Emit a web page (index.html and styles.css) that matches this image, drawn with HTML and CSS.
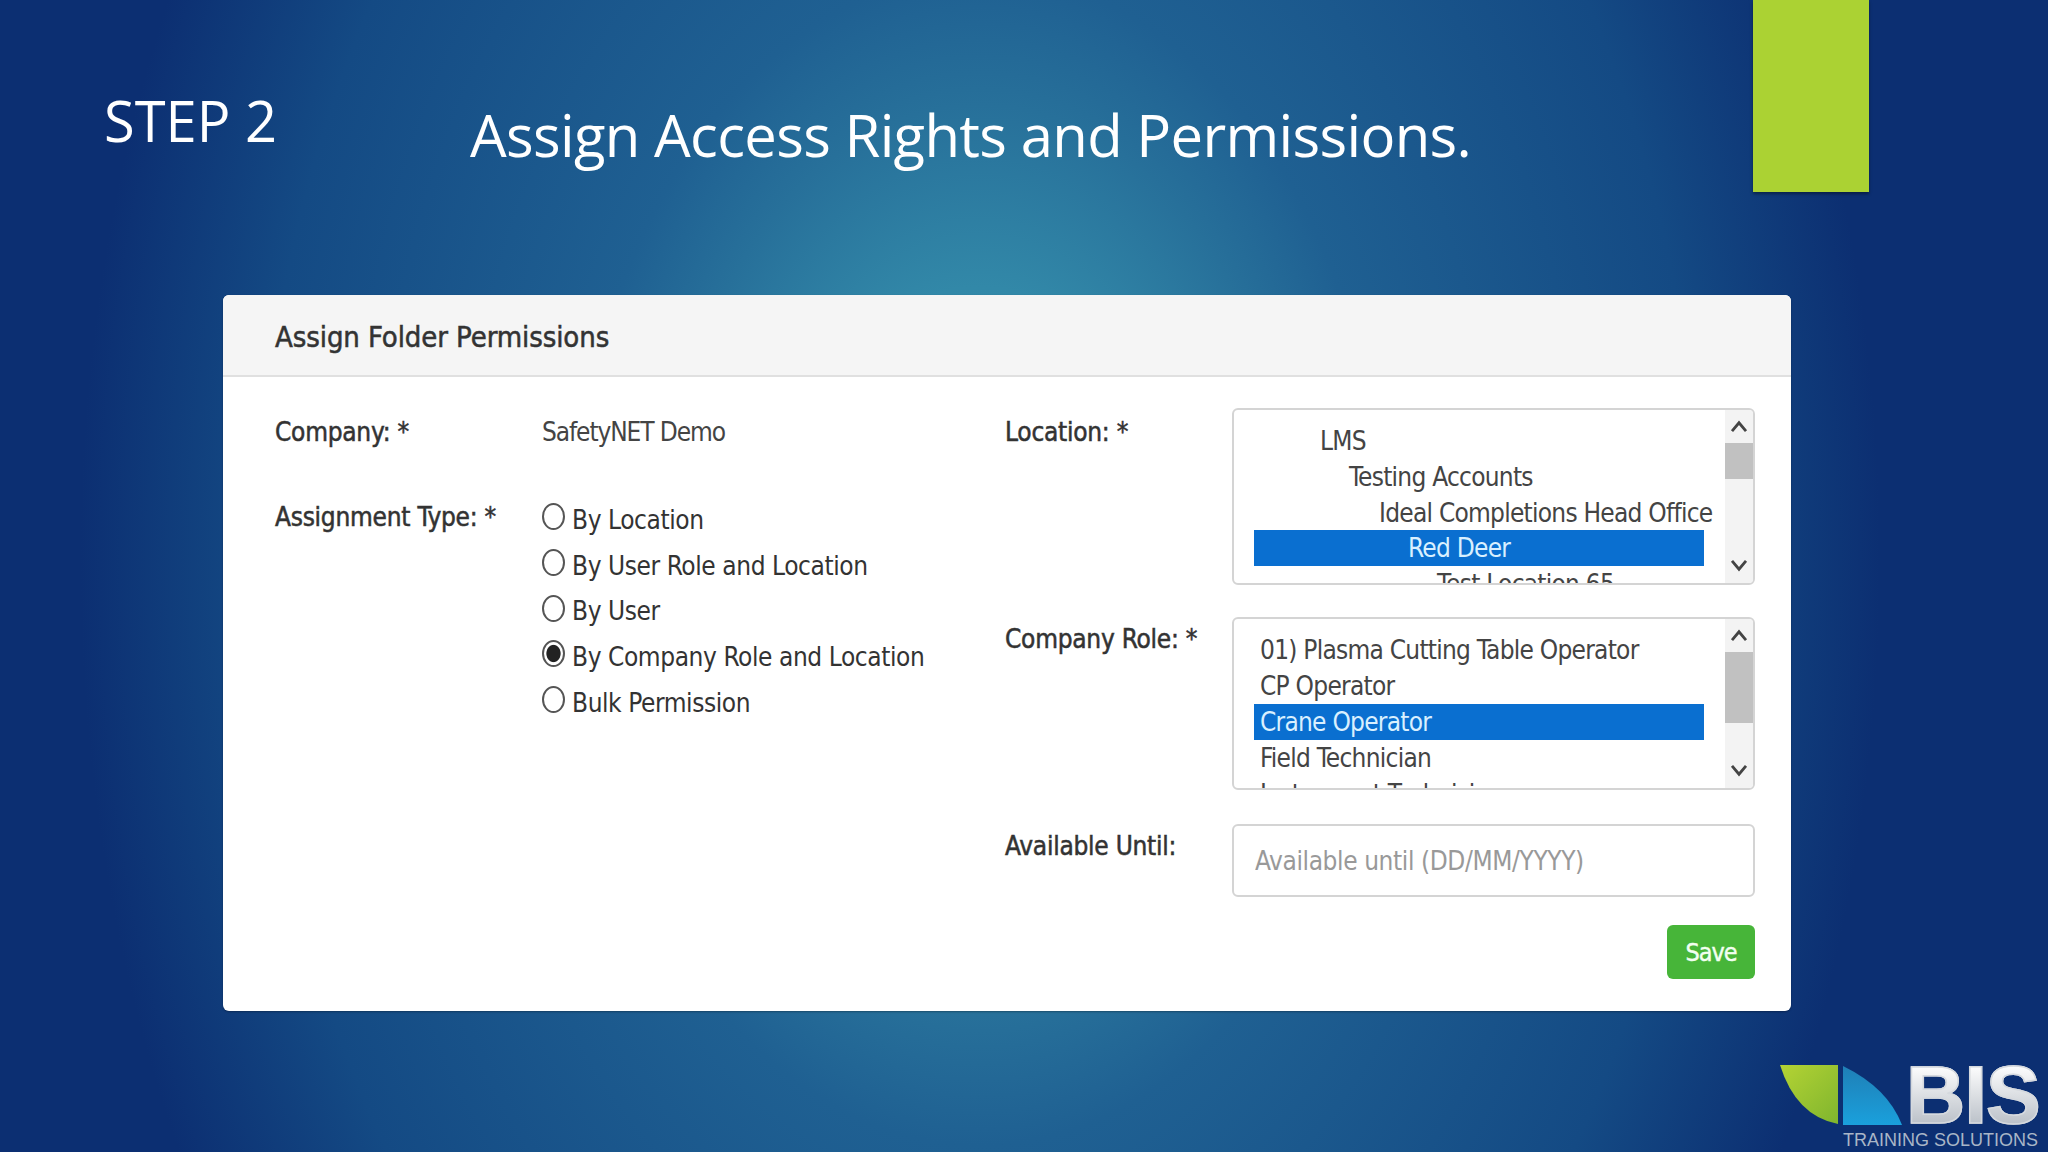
FILE: index.html
```html
<!DOCTYPE html>
<html lang="en">
<head>
<meta charset="utf-8">
<title>Assign Access Rights and Permissions</title>
<link rel="stylesheet" href="styles.css">
</head>
<body>
<main class="slide">
  <div class="accent"></div>
  <header class="titles">
    <div class="step">STEP 2</div>
    <h1 class="title">Assign Access Rights and Permissions.</h1>
  </header>
  <section class="card">
    <h2 class="card-head">Assign Folder Permissions</h2>
    <div class="card-body">
      <div class="col col-left">
        <div class="row row-company">
          <span class="label label-left">Company: *</span>
          <span class="value">SafetyNET Demo</span>
        </div>
        <div class="row">
          <span class="label label-left">Assignment Type: *</span>
          <div class="radios">
            <label class="radio"><input type="radio" name="t"><span>By Location</span></label>
            <label class="radio"><input type="radio" name="t"><span>By User Role and Location</span></label>
            <label class="radio"><input type="radio" name="t"><span>By User</span></label>
            <label class="radio"><input type="radio" name="t" checked><span>By Company Role and Location</span></label>
            <label class="radio"><input type="radio" name="t"><span>Bulk Permission</span></label>
          </div>
        </div>
      </div>
      <div class="col col-right">
        <div class="row row-list">
          <span class="label label-right label-location">Location: *</span>
          <div class="listbox listbox-location">
            <div class="options">
              <div class="opt lv1">LMS</div>
              <div class="opt lv2">Testing Accounts</div>
              <div class="opt lv3">Ideal Completions Head Office</div>
              <div class="opt lv4 selected">Red Deer</div>
              <div class="opt lv5">Test Location 65</div>
            </div>
            <div class="scrollbar">
              <svg class="arrow" viewBox="0 0 14 10"><path d="M2 8 L7 2 L12 8"/></svg>
              <div class="track"><div class="thumb thumb-a"></div></div>
              <svg class="arrow arrow-down" viewBox="0 0 14 10"><path d="M2 2 L7 8 L12 2"/></svg>
            </div>
          </div>
        </div>
        <div class="row row-list">
          <span class="label label-right">Company Role: *</span>
          <div class="listbox listbox-role">
            <div class="options">
              <div class="opt">01) Plasma Cutting Table Operator</div>
              <div class="opt">CP Operator</div>
              <div class="opt selected">Crane Operator</div>
              <div class="opt">Field Technician</div>
              <div class="opt">Instrument Technician</div>
            </div>
            <div class="scrollbar">
              <svg class="arrow" viewBox="0 0 14 10"><path d="M2 8 L7 2 L12 8"/></svg>
              <div class="track"><div class="thumb thumb-b"></div></div>
              <svg class="arrow arrow-down" viewBox="0 0 14 10"><path d="M2 2 L7 8 L12 2"/></svg>
            </div>
          </div>
        </div>
        <div class="row row-input">
          <span class="label label-right">Available Until:</span>
          <input class="date" type="text" placeholder="Available until (DD/MM/YYYY)">
        </div>
        <div class="actions"><button class="save" type="button">Save</button></div>
      </div>
    </div>
  </section>
  <div class="logo">
    <div class="logo-top">
      <svg class="logo-mark" viewBox="0 0 124 62">
        <defs>
          <linearGradient id="gg" x1="0" y1="0" x2="1" y2="1"><stop offset="0" stop-color="#b4d334"/><stop offset="1" stop-color="#7fb52e"/></linearGradient>
          <linearGradient id="bg" x1="0" y1="0" x2="0" y2="1"><stop offset="0" stop-color="#1f7fb6"/><stop offset="1" stop-color="#1aa0dc"/></linearGradient>
        </defs>
        <path fill="url(#gg)" d="M0 1 L58 1 L58 60 Q16 52 0 1 Z"/>
        <path fill="url(#bg)" d="M63 2 L63 61 L122 61 Q108 24 63 2 Z"/>
      </svg>
      <span class="logo-name">BIS</span>
    </div>
    <div class="logo-sub">TRAINING SOLUTIONS</div>
  </div>
</main>
</body>
</html>
```
FILE: styles.css
```css
* { box-sizing: border-box; }
html, body { margin: 0; padding: 0; }
body { width: 2048px; height: 1152px; overflow: hidden; }
.slide {
  position: relative;
  width: 2048px;
  height: 1152px;
  overflow: hidden;
  padding: 0 0 0 223px;
  background: radial-gradient(ellipse 900px 1300px at 980px 560px, #3c96b0 0%, #3288a8 21%, #27709a 35%, #1f6092 45%, #144a84 80%, #0c2f72 100%);
  background-color: #0c2f72;
  font-family: "DejaVu Sans Condensed", "DejaVu Sans", sans-serif;
}
.accent {
  position: absolute;
  left: 1753px;
  top: 0;
  width: 116px;
  height: 192px;
  background: #abd233;
  box-shadow: 0 2px 3px rgba(0, 0, 0, .4);
}
.titles {
  display: flex;
  align-items: flex-start;
  height: 295px;
  margin-left: -119px;
  color: #fff;
  font-family: "Open Sans", sans-serif;
}
.step { width: 366px; padding-top: 80px; font-size: 56px; line-height: 80px; }
.title { margin: 0; padding-top: 94px; font-size: 58px; line-height: 82px; font-weight: 400; letter-spacing: -.67px; white-space: nowrap; }
.card {
  width: 1568px;
  height: 716px;
  background: #fff;
  border-radius: 6px;
  overflow: hidden;
  color: #333;
  box-shadow: 0 1px 2px rgba(0, 0, 0, .3);
}
.card-head {
  margin: 0;
  height: 82px;
  padding: 0 52px;
  background: #f5f5f5;
  border-bottom: 2px solid #e0e0e0;
  font-size: 29px;
  line-height: 84px;
  font-weight: 400;
  letter-spacing: -.1px;
  -webkit-text-stroke: .5px #333;
}
.card-body { display: flex; padding: 31px 36px 0 52px; }
.col-left { width: 730px; padding-top: 2px; }
.col-right { width: 750px; }
.row { display: flex; align-items: flex-start; }
.row-company { height: 85px; }
.label { font-size: 26px; line-height: 36px; letter-spacing: -.25px; color: #333; -webkit-text-stroke: .5px #333; white-space: nowrap; }
.label-left { width: 267px; padding-top: 4px; }
.label-right { width: 227px; padding-top: 4px; }
.label-location { padding-top: 6px; }
.value { padding-top: 4px; font-size: 26px; line-height: 36px; letter-spacing: -1.1px; color: #444; }
.radios { display: flex; flex-direction: column; margin-top: -1px; }
.radio { display: flex; align-items: center; gap: 7px; height: 45.7px; font-size: 26px; letter-spacing: -.42px; color: #333; }
.radio span { padding-top: 6px; }
.radio input {
  appearance: none;
  margin: 0;
  width: 23px;
  height: 27px;
  border: 2px solid #555;
  border-radius: 50%;
  background: #fff;
}
.radio input:checked { background: radial-gradient(ellipse at center, #222 0 50%, #fff 56%); }
.listbox {
  display: flex;
  width: 523px;
  background: #fff;
  border: 2px solid #d4d4d4;
  border-radius: 6px;
  overflow: hidden;
}
.listbox-location { height: 177px; }
.listbox-role { height: 173px; }
.row-list { height: 209px; }
.row-list + .row-list { height: 207px; }
.options { flex: 1; padding: 13px 21px 0 20px; overflow: hidden; min-width: 0; }
.opt { height: 36px; line-height: 36px; padding-left: 6px; font-size: 26px; letter-spacing: -.75px; color: #444; white-space: nowrap; }
.lv1 { padding-left: 66px; }
.lv2 { padding-left: 95px; }
.lv3 { padding-left: 125px; margin-right: -21px; }
.lv4 { padding-left: 154px; margin-top: -1px; }
.lv5 { padding-left: 183px; }
.selected { background: #0a6fd0; color: #d9f0ff; }
.scrollbar { display: flex; flex-direction: column; width: 28px; background: #f3f3f3; }
.arrow { flex: none; width: 20px; height: 14px; margin: 10px auto 9px; }
.arrow-down { margin-bottom: 11px; }
.arrow path { fill: none; stroke: #444; stroke-width: 2; }
.track { flex: 1; }
.thumb { background: #c1c1c1; }
.thumb-a { height: 36px; }
.thumb-b { height: 71px; }
.date {
  width: 523px;
  height: 73px;
  padding: 0 21px;
  border: 2px solid #d4d4d4;
  border-radius: 6px;
  background: #fff;
  font: 26px "DejaVu Sans Condensed", "DejaVu Sans", sans-serif;
  letter-spacing: -.4px;
}
.date::placeholder { color: #999; opacity: 1; }
.actions { display: flex; justify-content: flex-end; padding-top: 28px; }
.save {
  width: 88px;
  height: 54px;
  padding: 0;
  border: 0;
  border-radius: 6px;
  background: #47b539;
  color: #f2fff0;
  font: 25px "DejaVu Sans Condensed", "DejaVu Sans", sans-serif;
  letter-spacing: -1px;
  -webkit-text-stroke: .4px #f2fff0;
}
.logo {
  position: absolute;
  left: 1780px;
  top: 1064px;
  width: 262px;
}
.logo-top { display: flex; align-items: center; height: 62px; }
.logo-mark { width: 124px; height: 62px; flex: none; }
.logo-name {
  margin-left: 2px;
  font: 700 82px/62px "Liberation Sans", sans-serif;
  letter-spacing: -1px;
  -webkit-text-stroke: 1.5px #d5d9de;
  background: linear-gradient(180deg, #fff, #b9bfc7);
  -webkit-background-clip: text;
  background-clip: text;
  color: transparent;
}
.logo-sub {
  margin: 4px 0 0 63px;
  font: 18px/20px "Liberation Sans", sans-serif;
  letter-spacing: 0;
  color: #a9b6c7;
  white-space: nowrap;
}
```
